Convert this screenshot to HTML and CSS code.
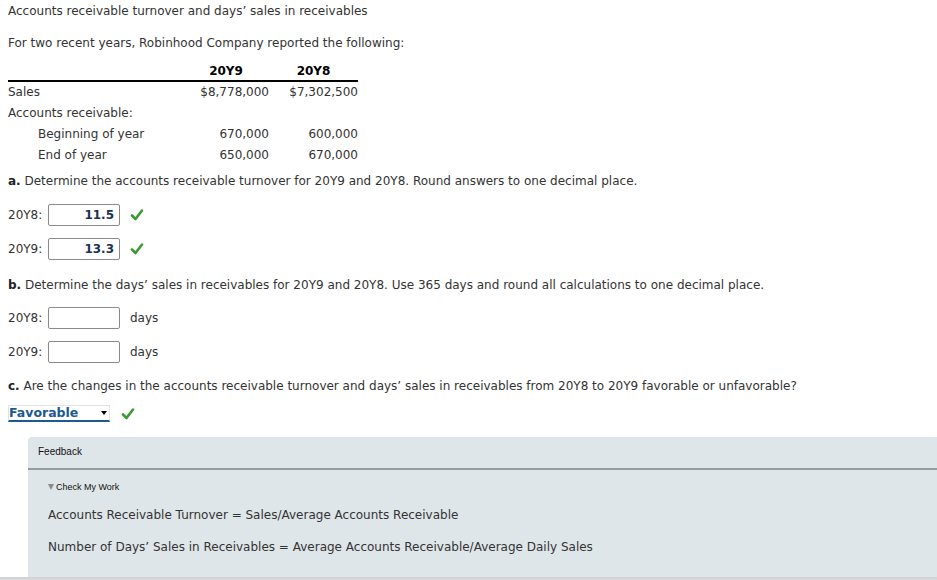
FILE: index.html
```html
<!DOCTYPE html>
<html>
<head>
<meta charset="utf-8">
<link rel="stylesheet" href="styles.css">
</head>
<body>
<div class="page">
  <p class="title">Accounts receivable turnover and days’ sales in receivables</p>
  <p class="intro">For two recent years, Robinhood Company reported the following:</p>
  <div class="fin">
    <div class="hdr"></div><div class="hdr c">20Y9</div><div class="hdr c">20Y8</div>
    <div class="cell">Sales</div><div class="cell r">$8,778,000</div><div class="cell r">$7,302,500</div>
    <div class="cell span">Accounts receivable:</div>
    <div class="cell ind">Beginning of year</div><div class="cell r">670,000</div><div class="cell r">600,000</div>
    <div class="cell ind">End of year</div><div class="cell r">650,000</div><div class="cell r">670,000</div>
  </div>
  <p class="q qa"><b>a.</b> Determine the accounts receivable turnover for 20Y9 and 20Y8. Round answers to one decimal place.</p>
  <div class="ans a1"><span class="lbl">20Y8:</span><span class="box filled">11.5</span><svg class="chk" viewBox="0 0 14 14"><path d="M2 7.5 L5.5 11 L12 2.5" /></svg></div>
  <div class="ans a2"><span class="lbl">20Y9:</span><span class="box filled">13.3</span><svg class="chk" viewBox="0 0 14 14"><path d="M2 7.5 L5.5 11 L12 2.5" /></svg></div>
  <p class="q qb"><b>b.</b> Determine the days’ sales in receivables for 20Y9 and 20Y8. Use 365 days and round all calculations to one decimal place.</p>
  <div class="ans b1"><span class="lbl">20Y8:</span><span class="box"></span><span class="unit">days</span></div>
  <div class="ans b2"><span class="lbl">20Y9:</span><span class="box"></span><span class="unit">days</span></div>
  <p class="q qc"><b>c.</b> Are the changes in the accounts receivable turnover and days’ sales in receivables from 20Y8 to 20Y9 favorable or unfavorable?</p>
  <div class="sel-row"><span class="sel">Favorable<span class="arrow"></span></span><svg class="chk" viewBox="0 0 14 14"><path d="M2 7.5 L5.5 11 L12 2.5" /></svg></div>
  <div class="feedback">
    <div class="fb-head">Feedback</div>
    <div class="fb-body">
      <div class="cmw"><span class="tri"></span>Check My Work</div>
      <p class="formula f1">Accounts Receivable Turnover = Sales/Average Accounts Receivable</p>
      <p class="formula f2">Number of Days’ Sales in Receivables = Average Accounts Receivable/Average Daily Sales</p>
    </div>
  </div>
  <div class="bottom-edge"></div>
</div>
</body>
</html>
```
FILE: styles.css
```css
html, body { margin: 0; padding: 0; background: #fff; }
body { font-family: "DejaVu Sans", Verdana, sans-serif; font-size: 12px; color: #333; overflow: hidden; width: 937px; height: 580px; }
.page { padding: 0 0 0 8px; }
p { margin: 0; }
.title { padding-top: 3px; line-height: 16px; }
.intro { margin-top: 16px; line-height: 16px; }
.fin { display: grid; grid-template-columns: 175px 86px 89px; width: 350px; margin-top: 12px; }
.hdr { font-weight: bold; color: #000; line-height: 16px; padding-bottom: 1px; border-bottom: 2px solid #000; }
.c { text-align: center; }
.r { text-align: right; }
.cell { line-height: 21px; }
.span { grid-column: 1 / 4; }
.ind { padding-left: 30px; }
.q { line-height: 16px; }
.q b { color: #222; }
.qa { margin-top: 7px; }
.ans { display: flex; align-items: center; height: 22px; }
.a1 { margin-top: 15px; }
.a2 { margin-top: 12px; }
.lbl { width: 40px; }
.box { box-sizing: border-box; width: 72px; height: 22px; border: 1px solid #8a8a8a; border-radius: 2px; background: #fff; text-align: right; padding-right: 5px; line-height: 20px; font-weight: bold; color: #1a3350; }
.chk { width: 14px; height: 14px; margin-left: 10px; }
.chk path { fill: none; stroke: #3a9a34; stroke-width: 2.6; stroke-linecap: round; stroke-linejoin: round; }
.unit { margin-left: 10px; }
.qb { margin-top: 17px; }
.b1 { margin-top: 14px; }
.b2 { margin-top: 12px; }
.qc { margin-top: 15px; }
.sel-row { display: flex; align-items: center; margin-top: 11px; height: 17px; }
.sel { box-sizing: border-box; width: 102px; height: 17px; display: flex; align-items: center; justify-content: space-between; font-weight: bold; color: #1d5a8e; font-size: 12.5px; border: 1px solid #e2e2e2; border-bottom: 2px solid #1d5a8e; line-height: 14px; padding-right: 2px; }
.arrow { width: 0; height: 0; border-left: 3px solid transparent; border-right: 3px solid transparent; border-top: 4px solid #000; }
.sel-row .chk { margin-left: 11px; }
.feedback { margin: 15px 0 0 20px; background: #dfe6e9; border-top-left-radius: 4px; height: 140px; }
.fb-head { box-sizing: border-box; font-family: "Liberation Sans", Arial, sans-serif; font-size: 10px; line-height: 12px; color: #111; padding: 9px 0 0 10px; height: 33px; border-bottom: 2px solid #969c9f; }
.fb-body { padding-left: 20px; }
.cmw { font-family: "Liberation Sans", Arial, sans-serif; font-size: 9px; color: #111; padding-top: 11px; display: flex; align-items: center; line-height: 12px; }
.tri { width: 0; height: 0; border-left: 3px solid transparent; border-right: 3px solid transparent; border-top: 6px solid #8a8a8a; margin-right: 2px; }
.formula { line-height: 16px; }
.f1 { margin-top: 14px; }
.f2 { margin-top: 16px; }
.bottom-edge { margin-left: -8px; height: 4px; background: linear-gradient(#cfd3d5, #d9d9d9); }
```
